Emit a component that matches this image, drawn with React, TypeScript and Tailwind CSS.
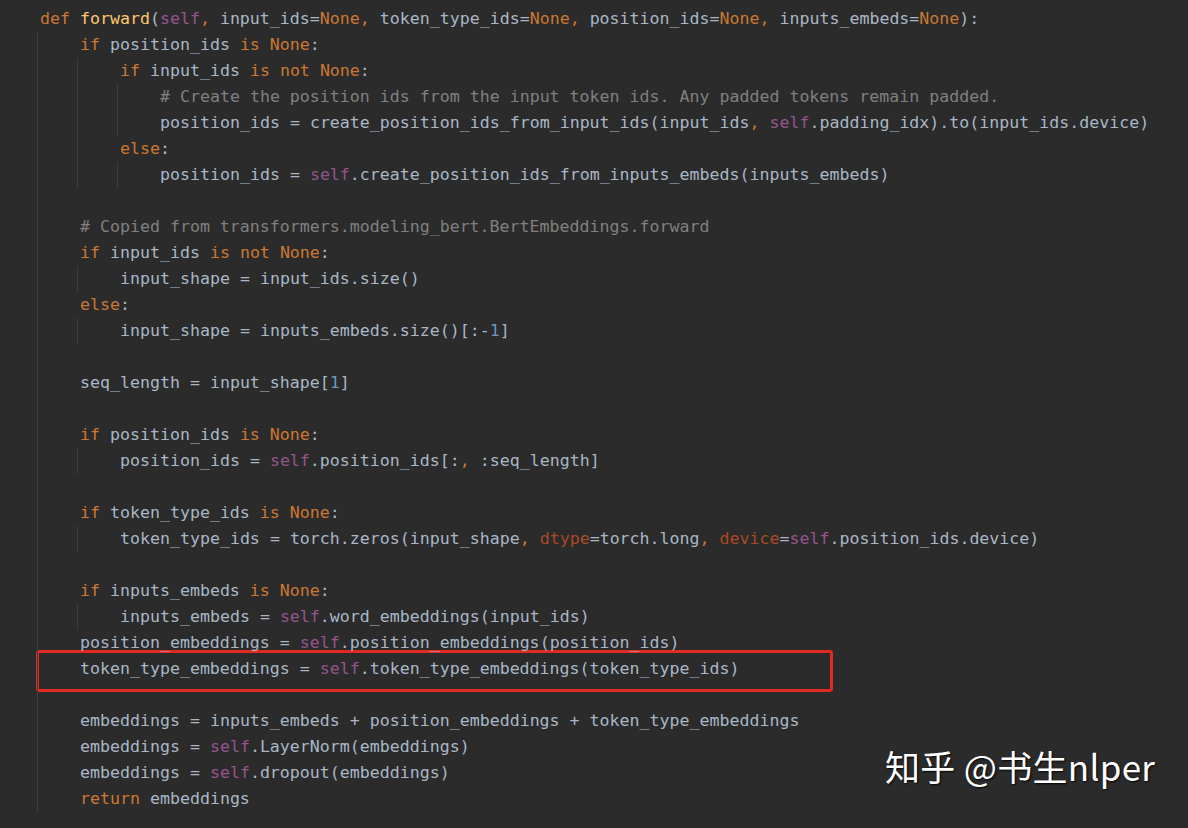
import React from 'react';

const SOURCE = [
  'def forward(self, input_ids=None, token_type_ids=None, position_ids=None, inputs_embeds=None):',
  '    if position_ids is None:',
  '        if input_ids is not None:',
  '            # Create the position ids from the input token ids. Any padded tokens remain padded.',
  '            position_ids = create_position_ids_from_input_ids(input_ids, self.padding_idx).to(input_ids.device)',
  '        else:',
  '            position_ids = self.create_position_ids_from_inputs_embeds(inputs_embeds)',
  '',
  '    # Copied from transformers.modeling_bert.BertEmbeddings.forward',
  '    if input_ids is not None:',
  '        input_shape = input_ids.size()',
  '    else:',
  '        input_shape = inputs_embeds.size()[:-1]',
  '',
  '    seq_length = input_shape[1]',
  '',
  '    if position_ids is None:',
  '        position_ids = self.position_ids[:, :seq_length]',
  '',
  '    if token_type_ids is None:',
  '        token_type_ids = torch.zeros(input_shape, dtype=torch.long, device=self.position_ids.device)',
  '',
  '    if inputs_embeds is None:',
  '        inputs_embeds = self.word_embeddings(input_ids)',
  '    position_embeddings = self.position_embeddings(position_ids)',
  '    token_type_embeddings = self.token_type_embeddings(token_type_ids)',
  '',
  '    embeddings = inputs_embeds + position_embeddings + token_type_embeddings',
  '    embeddings = self.LayerNorm(embeddings)',
  '    embeddings = self.dropout(embeddings)',
  '    return embeddings',
];

const KEYWORDS = new Set(['def', 'if', 'is', 'not', 'None', 'else', 'return']);
const NAMED_ARGS = new Set(['dtype', 'device']);

function colorOf(tok: string, next: string | undefined, prev: string | undefined) {
  if (KEYWORDS.has(tok)) return 'text-[#cc7832]';
  if (tok === ',') return 'text-[#cc7832]';
  if (tok === 'self') return 'text-[#94558d]';
  if (/^\d+$/.test(tok)) return 'text-[#6897bb]';
  if (tok === 'forward' && prev === ' ') return 'text-[#ffc66d]';
  if (NAMED_ARGS.has(tok) && next === '=') return 'text-[#aa4926]';
  return 'text-[#a9b7c6]';
}

function CodeText({ text }: { text: string }) {
  if (text.startsWith('#')) {
    return <span className="text-[#808080]">{text}</span>;
  }
  const toks = text.split(/(\s+|[A-Za-z_][A-Za-z0-9_]*|\d+|.)/).filter((t) => t !== '');
  return (
    <>
      {toks.map((t, i) => (
        <span key={i} className={colorOf(t, toks[i + 1], toks[i - 1])}>
          {t}
        </span>
      ))}
    </>
  );
}

const indentOf = (s: string) => (s.length - s.trimStart().length) / 4;

// blank lines keep the guides of the shallower neighbour
function guidesFor(idx: number) {
  const line = SOURCE[idx];
  if (line.trim() !== '') return indentOf(line);
  let p = idx - 1;
  while (p >= 0 && SOURCE[p].trim() === '') p--;
  let n = idx + 1;
  while (n < SOURCE.length && SOURCE[n].trim() === '') n++;
  return Math.min(p >= 0 ? indentOf(SOURCE[p]) : 0, n < SOURCE.length ? indentOf(SOURCE[n]) : 0);
}

export default function App() {
  return (
    <div className="relative h-[828px] w-[1188px] overflow-hidden bg-[#2b2b2b]">
      {/* highlight box */}
      <div className="absolute left-[36px] top-[650px] h-[42px] w-[797px] rounded-[3px] border-[3px] border-[#e02a22]" />

      <div className="relative z-10 flex flex-col pt-[6px] font-['DejaVu_Sans_Mono','Liberation_Mono',monospace] text-[16.6px]">
        {SOURCE.map((line, i) => (
          <div key={i} className="flex h-[26px] pl-[37px] leading-[26px]">
            {Array.from({ length: guidesFor(i) }).map((_, g) => (
              <span key={g} className="w-[40px] shrink-0 border-l border-[#3d3d3d]" />
            ))}
            <span className="whitespace-pre pl-[3px]">
              <CodeText text={line.trim()} />
            </span>
          </div>
        ))}
      </div>

      {/* watermark */}
      <div className="absolute left-[885px] top-[748px] z-20 whitespace-pre font-['Noto_Sans_CJK_SC','Noto_Sans',sans-serif] text-[35px] leading-none tracking-[0.3px] text-white [text-shadow:1px_1px_2px_rgba(0,0,0,0.9)]">
        知乎 @书生nlper
      </div>
    </div>
  );
}
